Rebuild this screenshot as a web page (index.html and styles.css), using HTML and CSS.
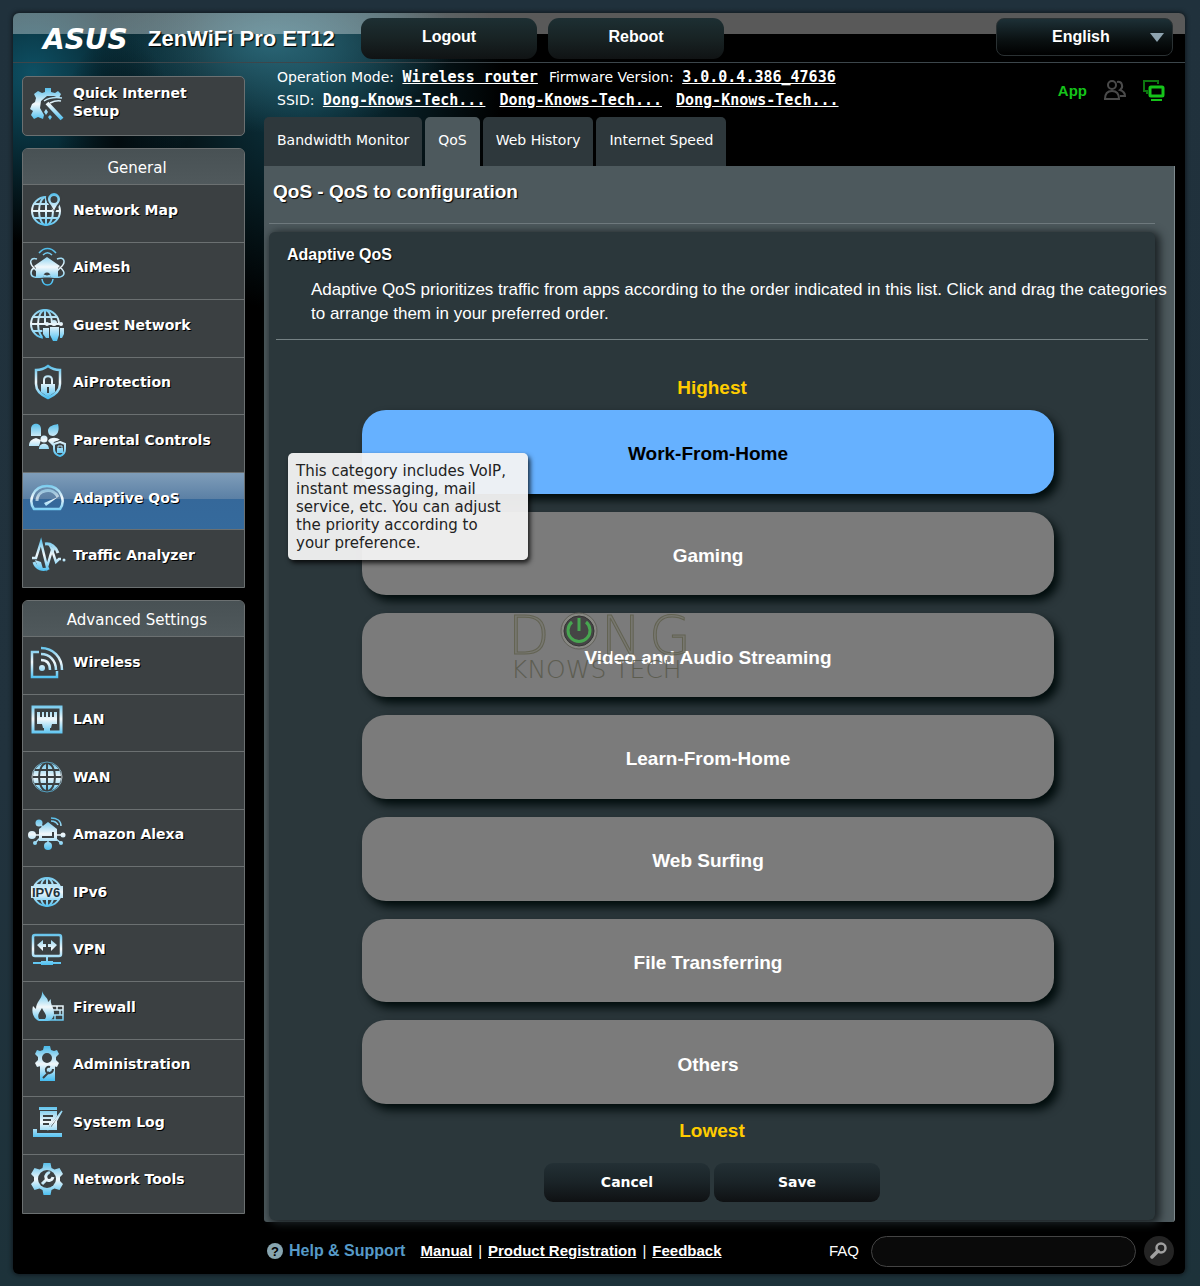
FILE: index.html
```html
<!DOCTYPE html>
<html lang="en">
<head>
<meta charset="utf-8">
<title>ZenWiFi Pro ET12 - QoS to configuration</title>
<link rel="stylesheet" href="styles.css">
</head>
<body>
<svg class="defs" aria-hidden="true">
  <defs>
    <linearGradient id="ice" gradientUnits="userSpaceOnUse" x1="0" y1="3" x2="0" y2="37">
      <stop offset="0" stop-color="#4fbcea"/><stop offset=".5" stop-color="#f2f8fb"/><stop offset="1" stop-color="#42bcf0"/>
    </linearGradient>
    <path id="gear" d="M16.500 4h7l1 5 3 1.500 5-1.500 3.500 6-3 3v4l3 3-3.500 6-5-1.500-3 1.500-1 5h-7l-1-5-3-1.500-5 1.500-3.500-6 3-3v-4l-3-3 3.500-6 5 1.500 3-1.500z"/>
    <g id="globe"><circle cx="19" cy="21" r="14"/><ellipse cx="19" cy="21" rx="7" ry="14"/><path d="M19 7v28M5 21h28M7 14h24M7 28h24"/></g>
  </defs>
</svg>

<div class="frame">
  <header class="topbar">
    <div class="brand">
      <svg class="logo" width="94" height="32" viewBox="0 0 94 32" role="img" aria-label="ASUS"><text x="2" y="26">ASUS</text></svg>
      <span class="model">ZenWiFi Pro ET12</span>
    </div>
    <button class="top-btn" type="button">Logout</button>
    <button class="top-btn" type="button">Reboot</button>
    <div class="language">
      <select aria-label="Language"><option>English</option></select>
      <svg class="caret" width="14" height="10" viewBox="0 0 14 10" aria-hidden="true"><path d="M0 0h14L7 9z"/></svg>
    </div>
  </header>

  <div class="body">
    <nav class="sidebar" aria-label="Main">
      <a class="quick" href="#">
        <svg class="ico" viewBox="0 0 40 40"><path class="fill" d="M5 20l3-2 1-4-2-4 4-3 4 2 3-1V4h6v4l4 1 3-2 3 3-2 4-5-2-7 0-6 5-1 7 4 7-1 4-5-2-4 2-3-4 2-4-3-2z"/><path d="M20 19l15 16" stroke-width="4"/><path d="M17 17c6-4 11-4 18-3M23 19c4-2 7-3 11-2" stroke-width="1.500"/><path class="fill" d="M19 25l2 3-2 3-2-3zM23 31l2 2-2 3-2-3z"/></svg>
        <span>Quick Internet<br>Setup</span>
      </a>

      <section class="menu">
        <h2>General</h2>
        <ul class="general">
          <li><a href="#"><svg class="ico" viewBox="0 0 40 40"><use href="#globe"/><path class="erase" d="M27 0c5 0 8 4 8 8 0 5-4 8-7 15-4-7-9-10-9-15 0-4 3-8 8-8z"/><path class="fill" fill-rule="evenodd" d="M27 3c3 0 6 3 6 6 0 4-4 6-6 12-2-6-6-8-6-12 0-3 3-6 6-6zm0 3a3 3 0 1 0 0 7 3 3 0 0 0 0-7z"/></svg>Network Map</a></li>
          <li><a href="#"><svg class="ico" viewBox="0 0 40 40"><path class="fill" d="M7 19l13-9 13 9-2 2v9h-7c0-6-8-6-8 0H9v-9z"/><path d="M12 6c5-6 12-6 17 0M16 8c3-3 6-3 9 0M10 12c-6-2-9 3-3 9 4 5 10 9 18 9 7 1 12 0 12-4 0-2-2-4-4-6M30 12c7-3 10 3 3 9-4 5-10 9-18 9-7 1-11 0-11-4 0-2 1-4 3-5M15 32c1 8 10 8 11 0" stroke-width="1.500"/></svg>AiMesh</a></li>
          <li><a href="#"><svg class="ico" viewBox="0 0 40 40"><g transform="translate(-1 -2)"><use href="#globe"/></g><path class="erase" d="M15 20h23v16H16z"/><g class="fill"><circle cx="20" cy="19" r="2"/><circle cx="27" cy="18" r="3"/><circle cx="34" cy="19" r="2"/><path d="M16 23h6v10h-3l-3-4zM23 22h9v8l-2 6h-4l-3-6zM33 23h4v6l-2 4h-2z"/></g></svg>Guest Network</a></li>
          <li><a href="#"><svg class="ico" viewBox="0 0 40 40"><path d="M21 4c4 3 7 4 12 4v14c0 7-5 11-12 14-7-3-12-7-12-14V8c5 0 8-1 12-4z" stroke-width="2.500"/><path d="M17 22v-4c0-5 8-5 8 0v4"/><path class="fill" fill-rule="evenodd" d="M14 22h14v8l-7 5-7-5zm6 3v6h2v-6z"/></svg>AiProtection</a></li>
          <li><a href="#"><svg class="ico" viewBox="0 0 40 40"><g class="fill"><path d="M4 16V9c0-7 10-7 10 0v7zM21 10c1-4 5-5 10-6 2 7-1 12-5 12s-5-3-5-6zM2 26c0-5 3-7 7-8l5 2-2 6z"/><circle cx="17" cy="19" r="3.500"/><path d="M12 29c0-7 10-7 10 0zM21 21c2-4 9-4 12-1l-6 2v5z"/></g><path class="erase" d="M33 20l6 3v6c0 5-3 7-6 8-4-1-7-3-7-8v-6z"/><path d="M33 22l5 2v5c0 4-2 6-5 7-4-1-6-3-6-7v-5z"/><path class="fill" d="M30 28h6v5h-6z"/><path d="M31 28v-2h4v2" stroke-width="1"/></svg>Parental Controls</a></li>
          <li><a class="active" href="#"><svg class="ico" viewBox="0 0 40 40"><path d="M7 31C1 23 6 8 20 8s19 15 13 23z" stroke-width="2.500"/><path d="M10 23c0-12 16-14 21-4" stroke-width="3" opacity=".7"/><path class="fill" d="M31 19L19 28l-2-3z"/></svg>Adaptive QoS</a></li>
          <li><a href="#"><svg class="ico" viewBox="0 0 40 40"><path d="M18 9c6-1 11 3 13 9M7 27c2 7 9 9 15 6" stroke-width="3"/><path d="M5 23h4l5-16 6 25 5-17 4 12 3-3h2" stroke-width="2.500"/><path class="fill" d="M21 9l7 5-2 5zM8 25l6 2 2 7-5-2z"/><circle class="fill" cx="37" cy="25" r="1.500"/></svg>Traffic Analyzer</a></li>
        </ul>
      </section>

      <section class="menu">
        <h2>Advanced Settings</h2>
        <ul class="advanced">
          <li><a href="#"><svg class="ico" viewBox="0 0 40 40"><path d="M12 10H5v25h25v-6" stroke-width="2.500"/><path d="M14 6c12 0 21 9 21 22M14 12c9 0 15 7 15 16M14 18c6 0 9 4 9 10" stroke-width="2.500"/><circle class="fill" cx="15" cy="26" r="3"/></svg>Wireless</a></li>
          <li><a href="#"><svg class="ico" viewBox="0 0 40 40"><path d="M6 8h28v25H6z" stroke-width="3"/><path class="fill" d="M10 13h3v5h2v-5h2v5h2v-5h2v5h2v-5h2v5h2v-5h3v12h-5l-1 4h-1v3h-6v-3h-1l-1-4h-5z"/></svg>LAN</a></li>
          <li><a href="#"><svg class="ico" viewBox="0 0 40 40"><circle class="fill" cx="20" cy="20" r="14"/><g class="ink"><ellipse cx="20" cy="20" rx="8" ry="14"/><path d="M20 6v28M6 20h28M8 13h24M8 27h24"/></g><circle cx="20" cy="20" r="15" stroke-width="1" opacity=".7"/></svg>WAN</a></li>
          <li><a href="#"><svg class="ico" viewBox="0 0 40 40"><path d="M5 21h30M12 9l5 5M9 28l4-4M21 26v6M34 29l-5-4" stroke-width="1.500"/><g class="fill"><path d="M12 27V15l9-7 9 7v12z"/><circle cx="5" cy="21" r="4"/><circle cx="12" cy="9" r="3.500"/><circle cx="8" cy="29" r="2"/><circle cx="21" cy="32" r="4"/><circle cx="34" cy="29" r="2"/><circle cx="36" cy="21" r="2.500"/></g><path class="ink" d="M15 23h12M26 18v5"/><path d="M24 4c6 0 10 3 10 8M24 7c4 0 6 2 7 4" stroke-width="1.500"/></svg>Amazon Alexa</a></li>
          <li><a href="#"><svg class="ico" viewBox="0 0 40 40"><g transform="translate(1 -1)"><use href="#globe"/></g><path class="fill" d="M4 14h32v12H4z"/><text class="ip" x="5" y="25">IPV6</text></svg>IPv6</a></li>
          <li><a href="#"><svg class="ico" viewBox="0 0 40 40"><rect x="6" y="6" width="28" height="21" rx="2" stroke-width="2.500"/><path d="M20 27v6M6 34h28" stroke-width="2"/><path class="fill" d="M14 32h12v4H14zM10 16l6-5v4h3v3h-3v4zM30 16l-6-5v4h-3v3h3v4z"/></svg>VPN</a></li>
          <li><a href="#"><svg class="ico" viewBox="0 0 40 40"><path class="fill" fill-rule="evenodd" d="M15 4c2 6 6 6 6 11l3-3c-1 6 3 8 3 14 0 6-4 8-8 8H12c-5-2-8-8-6-15l3 3c0-8 7-10 6-18zm0 17c-3 5-5 7-3 11h6c3-4-1-6-3-11z"/><path d="M25 19h11v14H20M24 23h12M23 28h13M30 19v4M33 23v5M28 28v5" stroke-width="1.500"/></svg>Firewall</a></li>
          <li><a href="#"><svg class="ico" viewBox="0 0 40 40"><path class="fill" fill-rule="evenodd" d="M17 2h6l1 4 3 1 3-1 2 4-3 3v3l3 3-2 4-4-1-3 2h-6l-3-2-4 1-2-4 3-3v-3L8 10l2-4 3 1 3-1zm3 7a5 5 0 1 0 0 10 5 5 0 0 0 0-10z"/><path class="fill" d="M13 22h15v15H13z"/><path class="ink" d="M16 34l6-6M26 25c0 4-6 6-7 2-1-2 1-5 4-4" stroke-width="1.500"/></svg>Administration</a></li>
          <li><a href="#"><svg class="ico" viewBox="0 0 40 40"><path class="fill" d="M12 5h18v3H12zM13 9h17v19H13zM6 27h4v4h25v4H6z"/><path class="ink" d="M16 14h10M16 18h8M16 22h6M35 9L23 25"/><path d="M35 9L24 23l-2 4 4-2z" stroke-width="1.500"/></svg>System Log</a></li>
          <li><a href="#"><svg class="ico" viewBox="0 0 40 40"><use href="#gear" class="fill"/><circle class="erase" cx="20" cy="20" r="9"/><path d="M15 25l5-5M26 18c-1 4-6 5-7 1-1-3 2-6 4-5" stroke-width="3"/></svg>Network Tools</a></li>
        </ul>
      </section>
    </nav>

    <main class="main">
      <div class="info">
        <div class="status">
          <p>Operation Mode: <a class="mono" href="#">Wireless router</a><span class="firmware">Firmware Version: <a class="mono" href="#">3.0.0.4.386_47636</a></span></p>
          <p class="ssids"><span>SSID: <a class="mono" href="#">Dong-Knows-Tech...</a></span><a class="mono" href="#">Dong-Knows-Tech...</a><a class="mono" href="#">Dong-Knows-Tech...</a></p>
        </div>
        <div class="shortcuts">
          <a href="#">App</a>
          <svg width="24" height="22" viewBox="0 0 24 22" aria-hidden="true" fill="none" stroke="#4a4a4a" stroke-width="2"><circle cx="9" cy="5" r="4"/><path d="M2 19c0-5 2-8 7-8s7 3 7 8zM14 2c5-1 7 5 3 8 3 1 5 3 5 6h-5"/></svg>
          <svg width="22" height="22" viewBox="0 0 22 22" aria-hidden="true" fill="none" stroke="#15c41a"><path d="M15 4V1H1v10h3v3" stroke-width="2" opacity=".6"/><rect x="7" y="7" width="13" height="9" rx="1" stroke-width="3"/><path d="M8 20h11" stroke-width="2"/></svg>
        </div>
      </div>

      <nav class="tabs" aria-label="QoS sections">
        <a href="#">Bandwidth Monitor</a><a class="current" href="#">QoS</a><a href="#">Web History</a><a href="#">Internet Speed</a>
      </nav>

      <section class="panel">
        <h1>QoS - QoS to configuration</h1>
        <div class="card">
          <h2>Adaptive QoS</h2>
          <p class="desc">Adaptive QoS prioritizes traffic from apps according to the order indicated in this list. Click and drag the categories<br>to arrange them in your preferred order.</p>
          <p class="level">Highest</p>
          <ol class="categories">
            <li class="selected">Work-From-Home</li>
            <li>Gaming</li>
            <li>Video and Audio Streaming</li>
            <li>Learn-From-Home</li>
            <li>Web Surfing</li>
            <li>File Transferring</li>
            <li>Others</li>
          </ol>
          <p class="level lowest">Lowest</p>
          <div class="actions">
            <button type="button">Cancel</button>
            <button type="button">Save</button>
          </div>
          <div class="tooltip" role="tooltip">This category includes VoIP, instant messaging, mail service, etc. You can adjust the priority according to your preference.</div>
          <svg class="watermark" width="190" height="84" viewBox="0 0 190 84" role="img" aria-label="Dong Knows Tech">
            <g class="mark"><text x="-2" y="51" font-size="54">D</text><text x="91" y="51" font-size="54">N</text><text x="139" y="51" font-size="54">G</text><text class="small" x="1" y="75" font-size="25">KNOWS TECH</text></g>
            <circle cx="69" cy="28" r="18" fill="#8a8a84" stroke="#5c5c54"/><circle cx="69" cy="28" r="15" fill="#3c3c3c" stroke="#282828"/>
            <path d="M62 19a11 11 0 1 0 14 0M69 15v13" fill="none" stroke="#3fae49" stroke-width="3"/>
          </svg>
        </div>
      </section>

      <footer class="footer">
        <a class="help" href="#"><svg width="16" height="16" viewBox="0 0 16 16" aria-hidden="true"><circle cx="8" cy="8" r="8" fill="#87a5b0"/><text x="8" y="13" text-anchor="middle">?</text></svg>Help &amp; Support</a>
        <div class="links"><a href="#">Manual</a><span>|</span><a href="#">Product Registration</a><span>|</span><a href="#">Feedback</a></div>
        <label for="faq">FAQ</label>
        <input id="faq" type="text">
        <button class="search" type="button" aria-label="Search"><svg width="18" height="18" viewBox="0 0 18 18" fill="none" stroke="#a0a0a0"><circle cx="11" cy="6" r="4.500" stroke-width="2.500"/><path d="M8 9l-6 6" stroke-width="3.500" stroke-linecap="round"/></svg></button>
      </footer>
    </main>
  </div>
</div>
</body>
</html>
```
FILE: styles.css
```css
* { box-sizing: border-box; }
body {
  margin: 0;
  padding: 13px 15px 12px 13px;
  background: linear-gradient(#20313c, #21323d 60%, #1d323a);
  color: #fff;
  font: 14px/18px "DejaVu Sans", sans-serif;
}
h1, h2, p, ul, ol { margin: 0; padding: 0; }
ul, ol { list-style: none; }
a { color: inherit; text-decoration: none; }
.defs { position: absolute; width: 0; height: 0; }

.frame {
  border-radius: 6px;
  overflow: hidden;
  box-shadow: 0 0 4px 1px #10181d;
  background:
    linear-gradient(#ffffff59, #ffffff59) 0 0 / 100% 21px no-repeat,
    radial-gradient(ellipse 60px 110px at 105px 130px, #02090ce6, #02090c00) no-repeat,
    radial-gradient(ellipse 170px 170px at 20px 60px, #0e5064, #0e506400) no-repeat,
    radial-gradient(ellipse 180px 90px at 260px 30px, #2a6575, #2a657500) no-repeat,
    radial-gradient(ellipse 200px 230px at 290px 70px, #0e3a47, #0e3a4700) no-repeat,
    #000;
}

/* top bar */
.topbar {
  display: flex;
  height: 50px;
  padding: 5px 12px 0 28px;
  border-bottom: 1px solid #3c464b;
}
.brand { display: flex; align-items: center; width: 320px; height: 41px; gap: 13px; }
.logo { flex: none; overflow: visible; }
.logo text { font: italic bold 28px "DejaVu Sans", sans-serif; fill: #fff; }
.model { font: bold 22px/30px "Liberation Sans", Arial, sans-serif; text-shadow: 1px 1px 1px #000; white-space: nowrap; }
button { border: 0; padding: 0; color: #fff; cursor: pointer; }
.top-btn {
  width: 176px;
  height: 41px;
  margin-right: 11px;
  padding-bottom: 3px;
  border-radius: 11px;
  background: linear-gradient(#1d2f33, #182324 50%, #101314);
  font: bold 16px/20px "Liberation Sans", Arial, sans-serif;
}
.language { position: relative; margin-left: auto; width: 177px; height: 38px; }
.language select {
  appearance: none;
  width: 100%;
  height: 100%;
  padding: 0 36px 0 55px;
  border: 1px solid #2a3133;
  border-radius: 8px;
  background: linear-gradient(#1d3036, #0a1011 60%, #000);
  color: #fff;
  font: bold 16px/20px "Liberation Sans", Arial, sans-serif;
}
.caret { position: absolute; right: 9px; top: 15px; fill: #8ea3af; pointer-events: none; }

.body { display: grid; grid-template-columns: 223px minmax(0, 1fr); gap: 19px; padding: 0 10px 0 9px; }

/* sidebar */
.sidebar { padding-top: 13px; font-weight: bold; text-shadow: 1px 1px 0 #000; }
.quick {
  display: flex;
  gap: 6px;
  height: 60px;
  padding: 7px 4px;
  border: 1px solid #6b7071;
  border-radius: 5px;
  background: #3b4042;
}
.menu { margin-top: 12px; border: 1px solid #6b7071; border-radius: 6px 6px 0 0; background: #3b4042; }
.menu h2 {
  height: 35px;
  padding: 1px 0 0 7px;
  border-radius: 5px 5px 0 0;
  background: linear-gradient(#485154, #50595c);
  font: 15px/36px "DejaVu Sans", sans-serif;
  text-align: center;
  text-shadow: none;
}
.menu ul { display: grid; grid-auto-rows: 1fr; }
.general { min-height: 403px; }
.menu .advanced { min-height: 577px; padding-bottom: 2px; }
.menu a {
  display: flex;
  align-items: center;
  gap: 6px;
  height: 100%;
  padding: 0 4px 7px;
  border-top: 1px solid #6b7071;
}
.menu a.active { background: linear-gradient(#7f9db9, #5b80a5 46%, #35689a 46%, #356a9c); }
.ico { flex: none; width: 40px; height: 40px; fill: none; stroke: url(#ice); stroke-width: 2; }
.ico .fill { fill: url(#ice); stroke: none; }
.ico .erase { fill: #3b4042; stroke: none; }
.ico .ink { fill: none; stroke: #3b4042; stroke-width: 2; }
.ico .ip { font: bold 13px "Liberation Sans", Arial, sans-serif; fill: #22323a; stroke: none; text-shadow: none; }

/* status lines */
.info { display: flex; justify-content: space-between; height: 54px; padding: 3px 10px 0 13px; line-height: 23px; }
.status p { white-space: nowrap; }
.mono { font: bold 15px/23px "DejaVu Sans Mono", monospace; text-decoration: underline; }
.mono:first-child { margin-left: 4px; }
.firmware { margin-left: 11px; }
.ssids { display: flex; gap: 14px; }
.shortcuts { display: flex; align-items: center; gap: 16px; height: 48px; padding-top: 2px; color: #15c41a; font: bold 15px/20px "Liberation Sans", Arial, sans-serif; }

/* tabs */
.tabs { display: flex; gap: 3px; }
.tabs a { height: 49px; padding: 0 13px; border-radius: 5px 5px 0 0; background: #2e383c; line-height: 47px; }
.tabs .current { background: #4d595d; }

.panel { padding: 14px 19px 2px 5px; border-right: 1px solid #7e8a8e; background: #4d595d; border-radius: 0 0 3px 3px; font-family: "Liberation Sans", Arial, sans-serif; }
.panel h1 { padding: 0 0 19px 4px; border-bottom: 1px solid #707b7f; font: bold 19px/24px "Liberation Sans", Arial, sans-serif; text-shadow: 1px 1px 1px #000; }
.card {
  position: relative;
  margin-top: 8px;
  padding: 11px 0 18px;
  border-radius: 6px;
  background: #2b373b;
  box-shadow: 3px 2px 8px 2px #1b2225;
}
.card h2 { padding-left: 18px; font: bold 16px/24px "Liberation Sans", Arial, sans-serif; text-shadow: 1px 1px 1px #000; }
.desc { margin: 0 7px; padding: 11px 0 13px 35px; border-bottom: 1px solid #758184; font-size: 17px; line-height: 24px; white-space: nowrap; }
.level { margin-top: 36px; color: #fc0; font-weight: bold; font-size: 19px; line-height: 24px; text-align: center; }
.categories { display: grid; grid-auto-rows: 1fr; gap: 18px; min-height: 694px; margin: 10px 101px 0 93px; }
.categories li {
  display: grid;
  place-items: center;
  padding-top: 5px;
  border-radius: 24px;
  background: #7b7b7b;
  box-shadow: 5px 6px 10px #000c0c;
  font-weight: bold;
  font-size: 19px;
  line-height: 24px;
}
.categories .selected { background: #66b1ff; color: #000; }
.level.lowest { margin-top: 15px; }
.actions { display: flex; justify-content: center; gap: 4px; margin-top: 20px; }
.actions button {
  width: 166px;
  height: 39px;
  padding-bottom: 1px;
  border-radius: 9px;
  background: linear-gradient(#233035, #1a2327 50%, #0f1113);
  font: bold 14px/18px "DejaVu Sans", sans-serif;
}
.tooltip {
  position: absolute;
  left: 19px;
  top: 221px;
  width: 240px;
  padding: 9px 12px 8px 8px;
  border-radius: 5px;
  background: #f3f3f3f2;
  color: #222;
  font: 15px/18px "DejaVu Sans", sans-serif;
  box-shadow: 2px 3px 5px #000c;
}
.watermark { position: absolute; left: 241px; top: 371px; overflow: visible; pointer-events: none; opacity: .85; }
.mark { font-family: "DejaVu Sans", sans-serif; font-weight: 200; fill: #77776f; stroke: #5f5f4c; stroke-width: 1; }
.mark .small { stroke: none; fill: #58584a; }

/* footer */
.footer { display: flex; align-items: center; height: 52px; padding: 6px 1px 0 3px; font: bold 15px/20px "Liberation Sans", Arial, sans-serif; }
.help { display: flex; align-items: center; gap: 6px; margin-right: 15px; color: #569ac7; font-size: 16px; }
.help text { font: bold 13px "Liberation Sans", Arial, sans-serif; fill: #000; }
.links { display: flex; gap: 6px; }
.links a { text-decoration: underline; }
.links span { font-weight: normal; }
.footer label { margin-left: auto; font-weight: normal; }
.footer input { width: 265px; height: 31px; margin: 0 8px 0 12px; padding: 0 14px; border: 1px solid #444; border-radius: 16px; background: #0a0a0a; color: #fff; font: inherit; }
.search { display: grid; place-items: center; width: 30px; height: 30px; border-radius: 50%; background: #242424; }
```
